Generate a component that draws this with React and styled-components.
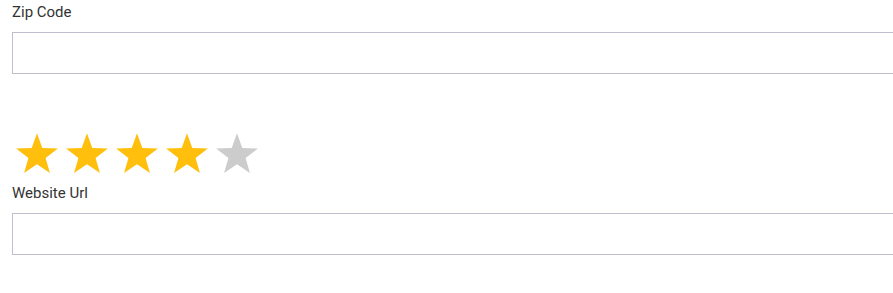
import React from 'react'
import styled, { createGlobalStyle } from 'styled-components'

const GlobalStyle = createGlobalStyle`
  body {
    margin: 0;
    background: #fff;
    font-family: Roboto, "Liberation Sans", sans-serif;
    overflow: hidden;
  }
`

const Form = styled.div`
  padding: 2px 0 0 12px;
  width: 920px;
`

const Field = styled.div`
  display: flex;
  flex-direction: column;
`

const Label = styled.label`
  font-size: 15px;
  line-height: 20px;
  color: #333;
  margin-bottom: 10px;
`

const Input = styled.input`
  box-sizing: border-box;
  height: 42px;
  width: 100%;
  border: 1px solid #bfbecd;
  border-radius: 0;
  outline: none;
  padding: 0 12px;
  font-size: 14px;
  font-family: inherit;
`

const Rating = styled.div`
  display: flex;
  margin: 55px 0 4px;
  height: 50px;
`

const StarWrap = styled.svg`
  width: 50px;
  height: 50px;
  flex: none;
  cursor: pointer;
`

const starPoints = (cx, cy, R, r) => {
  const pts = []
  for (let i = 0; i < 10; i++) {
    const rad = i % 2 === 0 ? R : r
    const a = (Math.PI / 5) * i - Math.PI / 2
    pts.push(`${(cx + rad * Math.cos(a)).toFixed(2)},${(cy + rad * Math.sin(a)).toFixed(2)}`)
  }
  return pts.join(' ')
}

const Star = ({ filled }) => (
  <StarWrap viewBox="0 0 50 50">
    <polygon
      points={starPoints(25, 26.3, 22, 9)}
      fill={filled ? '#ffbf0c' : '#cccccc'}
    />
  </StarWrap>
)

const App = () => {
  const value = 4
  return (
    <>
      <GlobalStyle />
      <Form>
        <Field>
          <Label>Zip Code</Label>
          <Input type="text" />
        </Field>
        <Rating>
          {[1, 2, 3, 4, 5].map(n => (
            <Star key={n} filled={n <= value} />
          ))}
        </Rating>
        <Field>
          <Label>Website Url</Label>
          <Input type="text" />
        </Field>
      </Form>
    </>
  )
}

export default App
